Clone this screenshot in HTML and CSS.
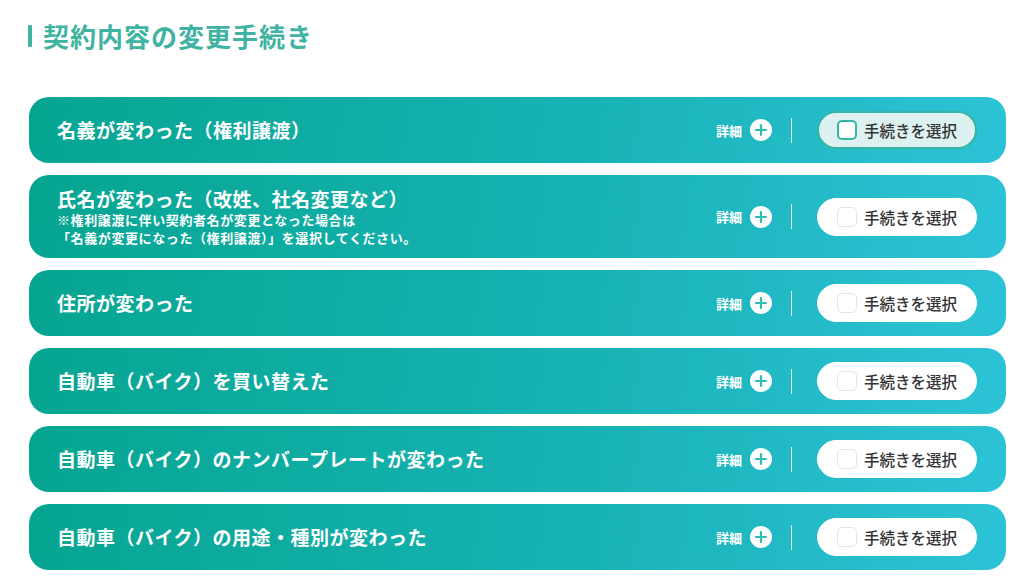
FILE: index.html
```html
<!DOCTYPE html>
<html lang="ja">
<head>
<meta charset="utf-8">
<link rel="stylesheet" href="styles.css">
</head>
<body>
<div class="page">
  <h2 class="heading">契約内容の変更手続き</h2>
  <ul class="list">
    <li class="card">
      <div class="title"><p class="name">名義が変わった（権利譲渡）</p></div>
      <div class="actions">
        <span class="detail">詳細</span>
        <span class="plus"><svg viewBox="0 0 22 22" width="22" height="22"><path d="M11 6v10M6 11h10" stroke="#2dbdb4" stroke-width="2.2" stroke-linecap="round"/></svg></span>
        <span class="divider"></span>
        <label class="select active"><span class="box"></span>手続きを選択</label>
      </div>
    </li>
    <li class="card tall">
      <div class="title">
        <p class="name">氏名が変わった（改姓、社名変更など）</p>
        <p class="note">※権利譲渡に伴い契約者名が変更となった場合は<br>「名義が変更になった（権利譲渡）」を選択してください。</p>
      </div>
      <div class="actions">
        <span class="detail">詳細</span>
        <span class="plus"><svg viewBox="0 0 22 22" width="22" height="22"><path d="M11 6v10M6 11h10" stroke="#2dbdb4" stroke-width="2.2" stroke-linecap="round"/></svg></span>
        <span class="divider"></span>
        <label class="select"><span class="box"></span>手続きを選択</label>
      </div>
    </li>
    <li class="card">
      <div class="title"><p class="name">住所が変わった</p></div>
      <div class="actions">
        <span class="detail">詳細</span>
        <span class="plus"><svg viewBox="0 0 22 22" width="22" height="22"><path d="M11 6v10M6 11h10" stroke="#2dbdb4" stroke-width="2.2" stroke-linecap="round"/></svg></span>
        <span class="divider"></span>
        <label class="select"><span class="box"></span>手続きを選択</label>
      </div>
    </li>
    <li class="card">
      <div class="title"><p class="name">自動車（バイク）を買い替えた</p></div>
      <div class="actions">
        <span class="detail">詳細</span>
        <span class="plus"><svg viewBox="0 0 22 22" width="22" height="22"><path d="M11 6v10M6 11h10" stroke="#2dbdb4" stroke-width="2.2" stroke-linecap="round"/></svg></span>
        <span class="divider"></span>
        <label class="select"><span class="box"></span>手続きを選択</label>
      </div>
    </li>
    <li class="card">
      <div class="title"><p class="name">自動車（バイク）のナンバープレートが変わった</p></div>
      <div class="actions">
        <span class="detail">詳細</span>
        <span class="plus"><svg viewBox="0 0 22 22" width="22" height="22"><path d="M11 6v10M6 11h10" stroke="#2dbdb4" stroke-width="2.2" stroke-linecap="round"/></svg></span>
        <span class="divider"></span>
        <label class="select"><span class="box"></span>手続きを選択</label>
      </div>
    </li>
    <li class="card">
      <div class="title"><p class="name">自動車（バイク）の用途・種別が変わった</p></div>
      <div class="actions">
        <span class="detail">詳細</span>
        <span class="plus"><svg viewBox="0 0 22 22" width="22" height="22"><path d="M11 6v10M6 11h10" stroke="#2dbdb4" stroke-width="2.2" stroke-linecap="round"/></svg></span>
        <span class="divider"></span>
        <label class="select"><span class="box"></span>手続きを選択</label>
      </div>
    </li>
  </ul>
</div>
</body>
</html>
```
FILE: styles.css
```css
* { box-sizing: border-box; }
html, body { margin: 0; padding: 0; background: #fff; }
body {
  font-family: "Noto Sans CJK JP", "Noto Sans", sans-serif;
  color: #333;
}
.page { padding: 18px 18px 0 28px; }
.heading {
  margin: 0;
  display: flex;
  align-items: center;
  font-size: 26px;
  font-weight: 700;
  line-height: 36px;
  color: #40b3a2;
  letter-spacing: 1px;
}
.heading::before {
  content: "";
  display: block;
  width: 4px;
  height: 22px;
  background: #40b3a2;
  border-radius: 1px;
  margin-right: 11px;
}
.list {
  list-style: none;
  margin: 43px 0 0 1px;
  padding: 0;
  display: flex;
  flex-direction: column;
  gap: 12px;
}
.card {
  display: flex;
  align-items: center;
  min-height: 66px;
  padding: 0 29px 0 28px;
  border-radius: 20px;
  background: linear-gradient(100deg, #06a590 0%, #17b2b4 55%, #2dc3d7 100%);
  color: #fff;
}
.card.tall { min-height: 83px; }
.title { flex: 1; }
.name {
  margin: 0;
  font-size: 19px;
  font-weight: 700;
  line-height: 24px;
  letter-spacing: 0.5px;
}
.note {
  margin: 0;
  font-size: 13px;
  font-weight: 700;
  line-height: 18px;
  letter-spacing: 0.6px;
}
.actions {
  display: flex;
  align-items: center;
}
.detail {
  font-size: 13px;
  font-weight: 700;
  margin-right: 8px;
}
.plus {
  width: 22px;
  height: 22px;
  border-radius: 50%;
  background: #fff;
  display: flex;
}
.divider {
  width: 1px;
  height: 25px;
  background: rgba(255,255,255,0.85);
  margin: 0 25px 0 19px;
}
.select {
  width: 160px;
  height: 38px;
  border-radius: 19px;
  background: #fff;
  display: flex;
  align-items: center;
  padding-left: 19px;
  font-size: 15.5px;
  font-weight: 500;
  color: #333;
  border: 1px solid #fff;
}
.select.active {
  background: #ddf2f0;
  border: 2px solid #38b4a4;
  padding-left: 18px;
}
.box {
  width: 20px;
  height: 20px;
  border-radius: 5px;
  border: 1px solid #e6e6e6;
  background: #fff;
  margin-right: 7px;
}
.select.active .box {
  border: 2px solid #38b4a4;
}
```
